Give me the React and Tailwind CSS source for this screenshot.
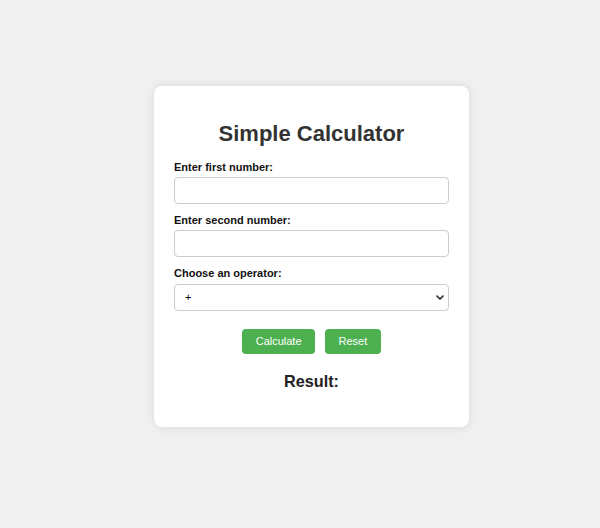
import { useState } from 'react';

const App = () => {
  const [first, setFirst] = useState('');
  const [second, setSecond] = useState('');
  const [op, setOp] = useState('+');
  const [result, setResult] = useState('');

  // Run the chosen operation on both numbers
  const handleCalculate = () => {
    const a = parseFloat(first);
    const b = parseFloat(second);
    if (isNaN(a) || isNaN(b)) {
      setResult('Please enter valid numbers');
      return;
    }
    if (op === '+') setResult(a + b);
    if (op === '-') setResult(a - b);
    if (op === '*') setResult(a * b);
    if (op === '/') setResult(b === 0 ? 'Cannot divide by zero' : a / b);
  };

  const handleReset = () => {
    setFirst('');
    setSecond('');
    setOp('+');
    setResult('');
  };

  return (
    <div className="min-h-screen bg-[#f0f0f0] pt-[86px] font-['Liberation_Sans',Arial,sans-serif]">
      <div className="ml-[154px] w-[315px] rounded-[8px] bg-white px-5 pt-[35px] pb-[36px] shadow-[0_0_10px_rgba(0,0,0,0.1)]">
        <h2 className="text-center text-[22px] leading-[25px] font-bold text-[#333]">Simple Calculator</h2>

        <label className="mt-[15px] mb-[3px] block text-[11px] leading-[13px] font-bold text-[#111]">
          Enter first number:
        </label>
        <input
          type="number"
          value={first}
          onChange={(e) => setFirst(e.target.value)}
          className="mb-[10px] block h-[27px] w-full rounded-[4px] border border-[#ccc] px-2 text-[12px] outline-none"
        />

        <label className="mb-[3px] block text-[11px] leading-[13px] font-bold text-[#111]">
          Enter second number:
        </label>
        <input
          type="number"
          value={second}
          onChange={(e) => setSecond(e.target.value)}
          className="mb-[10px] block h-[27px] w-full rounded-[4px] border border-[#ccc] px-2 text-[12px] outline-none"
        />

        <label className="mb-[4px] block text-[11px] leading-[13px] font-bold text-[#111]">
          Choose an operator:
        </label>
        <div className="relative">
          <select
            value={op}
            onChange={(e) => setOp(e.target.value)}
            className="block h-[27px] w-full appearance-none rounded-[4px] border border-[#ccc] bg-white pl-[10px] text-[11px] text-black outline-none"
          >
            <option value="+">+</option>
            <option value="-">-</option>
            <option value="*">*</option>
            <option value="/">/</option>
          </select>
          <svg
            className="pointer-events-none absolute top-[11px] right-[5px]"
            width="8"
            height="5"
            viewBox="0 0 8 5"
            fill="none"
          >
            <path d="M1 1l3 3 3-3" stroke="#222" strokeWidth="1.6" strokeLinecap="round" strokeLinejoin="round" />
          </svg>
        </div>

        <div className="mt-[18px] flex justify-center gap-[10px]">
          <button
            onClick={handleCalculate}
            className="h-[25px] rounded-[4px] bg-[#4caf50] px-[13.5px] text-[11px] text-white"
          >
            Calculate
          </button>
          <button
            onClick={handleReset}
            className="h-[25px] rounded-[4px] bg-[#4caf50] px-[13.5px] text-[11px] text-white"
          >
            Reset
          </button>
        </div>

        <h3 className="mt-[18px] text-center text-[16.2px] leading-[19px] font-bold text-[#222]">
          Result: {result}
        </h3>
      </div>
    </div>
  );
};

export default App;
